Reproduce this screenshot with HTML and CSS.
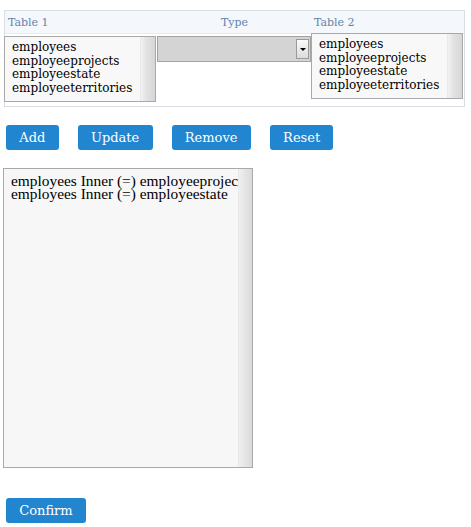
FILE: index.html
```html
<!DOCTYPE html>
<html>
<head>
<meta charset="utf-8">
<link rel="stylesheet" href="styles.css">
</head>
<body>
<div class="panel">
  <div class="head">
    <div class="h h1">Table 1</div>
    <div class="h h2">Type</div>
    <div class="h h3">Table 2</div>
  </div>
  <div class="row">
    <div class="listbox lb1">
      <div class="opts">
        <div>employees</div>
        <div>employeeprojects</div>
        <div>employeestate</div>
        <div>employeeterritories</div>
      </div>
      <div class="sbar"></div>
    </div>
    <div class="select">
      <div class="arrow"><span class="tri"></span></div>
    </div>
    <div class="listbox lb2">
      <div class="opts">
        <div>employees</div>
        <div>employeeprojects</div>
        <div>employeestate</div>
        <div>employeeterritories</div>
      </div>
      <div class="sbar"></div>
    </div>
  </div>
</div>
<div class="buttons">
  <button class="btn">Add</button>
  <button class="btn">Update</button>
  <button class="btn">Remove</button>
  <button class="btn">Reset</button>
</div>
<div class="joins">
  <div class="jopts">
    <div>employees Inner (=) employeeprojects</div>
    <div>employees Inner (=) employeestate</div>
  </div>
  <div class="sbar"></div>
</div>
<div class="confirm-row">
  <button class="btn">Confirm</button>
</div>
</body>
</html>
```

FILE: styles.css
```css
html, body {
  margin: 0;
  padding: 0;
  background: #ffffff;
}
body {
  font-family: "DejaVu Serif", serif;
  width: 471px;
  height: 527px;
  overflow: hidden;
}
.panel {
  margin: 10px 0 0 4px;
  width: 459px;
  border: 1px solid #d9dee5;
  padding-bottom: 4px;
}
.head {
  display: grid;
  grid-template-columns: 152px 154px 153px;
  height: 22px;
  background: #f4f7fb;
  border-bottom: 1px solid #e6ebf1;
  align-items: center;
  font-size: 11px;
  color: #6384ab;
}
.h1 { padding-left: 3px; }
.h2 { padding-left: 64px; }
.h3 { padding-left: 3px; }
.row {
  display: grid;
  grid-template-columns: 152px 154px 153px;
  align-items: start;
}
.listbox {
  display: flex;
  height: 64px;
  border: 1px solid #a9a9a9;
  background: #f8f8f8;
  font-size: 12px;
  line-height: 13.7px;
  color: #000;
  overflow: hidden;
}
.lb1 {
  margin-top: 2px;
  width: 150px;
  margin-left: -1px;
}
.lb2 {
  margin-top: -1px;
  width: 150px;
  margin-left: 0;
}
.opts {
  flex: 1;
  padding: 4px 0 0 7px;
  white-space: nowrap;
  overflow: hidden;
}
.sbar {
  width: 14px;
  flex: none;
  background: linear-gradient(to right, #f2f2f2 0%, #e2e2e2 40%, #d6d6d6 100%);
  border-left: 1px solid #e8e8e8;
}
.select {
  margin-top: 2px;
  height: 24px;
  border: 1px solid #a2a2a2;
  background: #d4d4d4;
  display: flex;
  justify-content: flex-end;
  align-items: center;
  padding-right: 1px;
}
.arrow {
  width: 11px;
  height: 18px;
  border: 1px solid #9a9a9a;
  background: linear-gradient(to bottom, #fbfbfb, #dcdcdc);
  display: flex;
  align-items: center;
  justify-content: center;
}
.tri {
  width: 0;
  height: 0;
  border-left: 3px solid transparent;
  border-right: 3px solid transparent;
  border-top: 3px solid #000;
}
.buttons {
  display: flex;
  gap: 19px;
  margin: 18px 0 0 6px;
}
.btn {
  font-family: "DejaVu Serif", serif;
  font-size: 13px;
  color: #ffffff;
  background: #2185d0;
  border: none;
  border-radius: 3px;
  height: 25px;
  padding: 0 13.3px;
  margin: 0;
}
.joins {
  display: flex;
  margin: 18px 0 0 3px;
  width: 248px;
  height: 298px;
  border: 1px solid #a9a9a9;
  background: #f7f7f7;
  overflow: hidden;
}
.jopts {
  flex: 1;
  padding: 5px 0 0 7px;
  font-family: "Liberation Serif", serif;
  font-size: 15.4px;
  line-height: 13.2px;
  white-space: nowrap;
  overflow: hidden;
}
.joins .sbar {
  width: 13px;
  background: linear-gradient(to right, #f0f0f0 0%, #e4e4e4 50%, #dadada 100%);
}
.confirm-row {
  margin: 30px 0 0 6px;
}
```
